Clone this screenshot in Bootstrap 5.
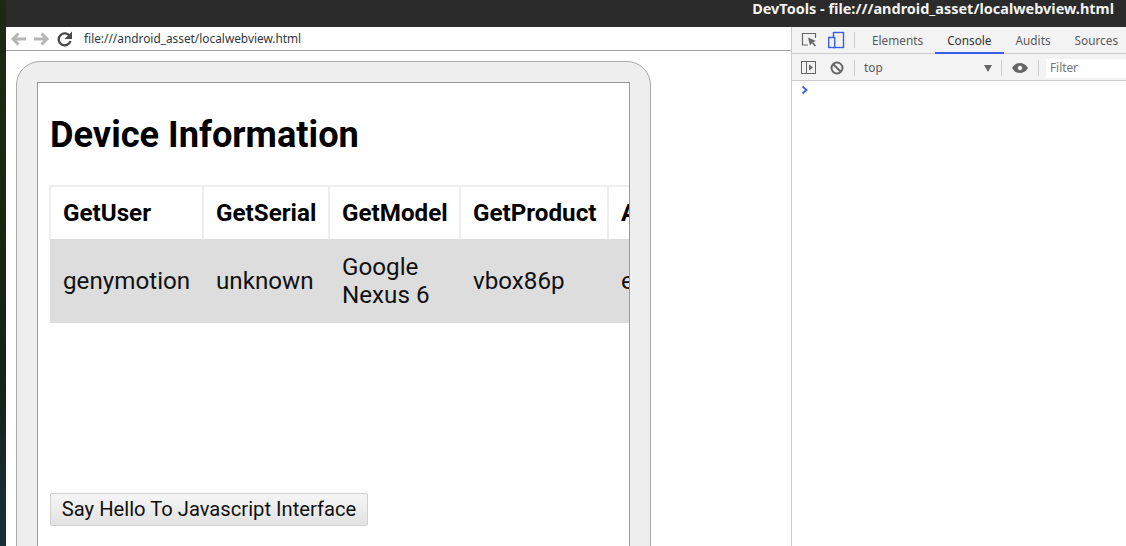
<!DOCTYPE html>
<html lang="en">
<head>
<meta charset="utf-8">
<title>DevTools</title>
<link rel="stylesheet" href="https://cdn.jsdelivr.net/npm/bootstrap@5.3.0/dist/css/bootstrap.min.css">
<style>
html,body{height:546px;overflow:hidden;background:#fff}
.shell{height:546px;width:1126px;overflow:hidden;font-family:"Noto Sans",sans-serif}
.titlebar{height:27px;background:#2b2b2b;color:#f2f2f2;font:700 14.48px/18px "Noto Sans",sans-serif;padding:0 12px 10px 0;flex:none}
.wall{width:6px;background:linear-gradient(180deg,#1c2a14 0,#18280f 40%,#14241a 70%,#1b2f38 100%);flex:none;margin-top:-27px;position:relative;z-index:2}
.page-pane{width:786px;flex:none;border-right:1px solid #ccc;min-height:0}
.addr{height:24px;border-bottom:1px solid #a3a3a3;line-height:22px;color:#303942;flex:none;padding-left:4px}
.addr-text{margin:-2px 0 0 10px;font-size:11.85px;white-space:nowrap}
.frame{margin:10px 0 0 10px;width:635px;height:600px;background:#eee;border:1px solid #aaa;border-radius:24px;padding:20px;flex:none}
.screen{width:593px;height:560px;background:#fff;border:1px solid #999;overflow:hidden;padding:0 12px}
.screen h1{font:700 36.2px/42px Roboto,sans-serif;margin:31px 0 29px;color:#000;white-space:nowrap}
.dev-table{border-collapse:collapse;font:400 24.2px/28px Roboto,sans-serif;color:#111;table-layout:fixed;width:760px;margin-left:-1px}
.dev-table th{font-weight:700;color:#000;background:#fff;border:2px solid #eee;border-bottom:0;height:53px;padding:0 13px 0 12px;white-space:nowrap}
.dev-table td{background:#ddd;height:84px;padding:0 13px;vertical-align:middle}
.say{display:block;margin-top:170px;width:318px;height:33px;padding:0 0 2px;border:1px solid #d0d0d0;border-radius:2px;background:linear-gradient(180deg,#f6f6f6,#e2e2e2);font:400 20.2px/28px Roboto,sans-serif;color:#111;text-align:center;white-space:nowrap}
.dev{flex:1 1 auto;min-width:0;color:#5a5a5a;font-size:11.8px}
.dev-row{background:#f3f3f3;border-bottom:1px solid #ccc;flex:none;padding-left:9px;height:27px}
.dev-bar{padding-top:2px}
.sep{width:1px;height:16px;background:#ccc;flex:none}
.sep-first{margin-left:7px}
.tabs-wrap{margin-left:5px}
.dtab{padding:0 12px;line-height:27px;height:27px;color:#5a5a5a;white-space:nowrap}
.dtab-on{color:#333;border-bottom:2px solid #3b5ee8}
.scope{width:146px;padding-left:9px;color:#5a5a5a}
.caret{width:0;height:0;border-left:4px solid transparent;border-right:4px solid transparent;border-top:7px solid #666;margin-left:auto;margin-right:9px}
.eye{margin:0 10px;flex:none}
.filter{background:#fff;height:19px;line-height:17px;flex:1;padding-left:4px;margin-left:7px;color:#757575}
.prompt{padding:4px 0 0 9px}
</style>
</head>
<body>
<div class="shell d-flex flex-column">
  <div class="titlebar d-flex justify-content-end align-items-center">DevTools - file:///android_asset/localwebview.html</div>
  <div class="d-flex flex-grow-1" style="min-height:0">
    <div class="wall"></div>
    <div class="page-pane d-flex flex-column">
      <div class="addr d-flex align-items-center">
        <svg width="64" height="16" viewBox="0 0 64 16" class="flex-shrink-0" aria-hidden="true">
          <path d="M16 8H3M8.500 2.500 3 8l5.500 5.500" fill="none" stroke="#b5b5b5" stroke-width="3"/>
          <path d="M24 8h13M31.500 2.500 37 8l-5.500 5.500" fill="none" stroke="#b5b5b5" stroke-width="3"/>
          <path d="M60 5.500A6 6 0 1 0 60.500 10" fill="none" stroke="#4a4a4a" stroke-width="2.400"/>
          <path d="M62 .5v7.500h-7.500z" fill="#4a4a4a"/>
        </svg>
        <span class="addr-text">file:///android_asset/localwebview.html</span>
      </div>
      <div class="frame">
        <div class="screen">
          <h1>Device Information</h1>
          <table class="dev-table">
            <colgroup><col style="width:153px"><col style="width:126px"><col style="width:131px"><col style="width:148px"><col style="width:200px"></colgroup>
            <tr><th>GetUser</th><th>GetSerial</th><th>GetModel</th><th>GetProduct</th><th>API</th></tr>
            <tr><td>genymotion</td><td>unknown</td><td>Google Nexus 6</td><td>vbox86p</td><td>en</td></tr>
          </table>
          <button type="button" class="say">Say Hello To Javascript Interface</button>
        </div>
      </div>
    </div>
    <div class="dev d-flex flex-column">
      <div class="dev-row d-flex align-items-center">
        <svg width="46" height="18" viewBox="0 0 46 18" class="flex-shrink-0" aria-hidden="true">
          <path d="M7 14H1.500V2.500h13V7" fill="none" stroke="#666" stroke-width="1.200"/>
          <path d="M7 6.500l8 3.500-3 1 3 3.500-1.500 1-2.500-3.500-2 2.500z" fill="#666"/>
          <rect x="32.500" y="1.500" width="10" height="15" fill="none" stroke="#3b5ee8" stroke-width="1.400"/>
          <rect x="27.700" y="6.500" width="6" height="10" fill="#f3f3f3" stroke="#3b5ee8" stroke-width="1.400"/>
        </svg>
        <span class="sep sep-first"></span>
        <div class="d-flex tabs-wrap flex-shrink-0">
          <span class="dtab">Elements</span><span class="dtab dtab-on">Console</span><span class="dtab">Audits</span><span class="dtab">Sources</span>
        </div>
      </div>
      <div class="dev-row dev-bar d-flex align-items-center">
        <svg width="46" height="16" viewBox="0 0 46 16" class="flex-shrink-0" aria-hidden="true">
          <rect x=".5" y="1.500" width="14" height="12" fill="none" stroke="#666"/>
          <path d="M5.500 1.500v12" stroke="#666"/><path d="M8 4.500l4 3-4 3z" fill="#666"/>
          <circle cx="36" cy="8" r="5.500" fill="none" stroke="#666" stroke-width="2"/>
          <path d="M32 4l8 8" stroke="#666" stroke-width="2"/>
        </svg>
        <span class="sep sep-first"></span>
        <div class="scope d-flex align-items-center"><span>top</span><span class="caret"></span></div>
        <span class="sep"></span>
        <svg width="16" height="10" viewBox="1 1 16 10" class="eye" aria-hidden="true">
          <path d="M1 6c2-3.500 5-5 8-5s6 1.500 8 5c-2 3.500-5 5-8 5S3 9.500 1 6z" fill="#666"/>
          <circle cx="9" cy="6" r="2.200" fill="#f3f3f3"/>
        </svg>
        <span class="sep"></span>
        <div class="filter">Filter</div>
      </div>
      <div class="prompt">
        <svg width="8" height="10" viewBox="0 0 8 10" class="d-block" aria-hidden="true"><path d="M1.500 1.500 5.500 5l-4 3.500" fill="none" stroke="#3b5ee8" stroke-width="1.800"/></svg>
      </div>
    </div>
  </div>
</div>
</body>
</html>
